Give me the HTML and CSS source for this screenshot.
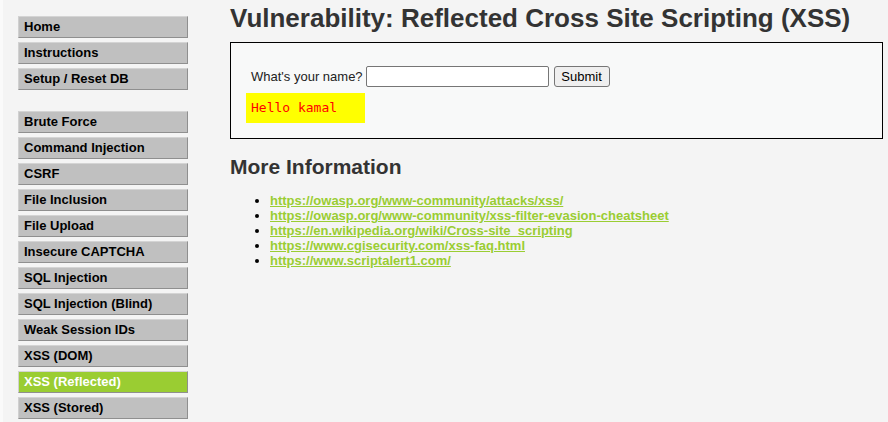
FILE: index.html
```html
<!DOCTYPE html>
<html>
<head>
<meta charset="utf-8">
<link rel="stylesheet" href="styles.css">
</head>
<body>
<div class="page">
  <div class="strip"></div>
  <nav class="menu">
    <ul class="menu-group">
      <li><a class="item" href="#">Home</a></li>
      <li><a class="item" href="#">Instructions</a></li>
      <li><a class="item" href="#">Setup / Reset DB</a></li>
    </ul>
    <ul class="menu-group">
      <li><a class="item" href="#">Brute Force</a></li>
      <li><a class="item" href="#">Command Injection</a></li>
      <li><a class="item" href="#">CSRF</a></li>
      <li><a class="item" href="#">File Inclusion</a></li>
      <li><a class="item" href="#">File Upload</a></li>
      <li><a class="item" href="#">Insecure CAPTCHA</a></li>
      <li><a class="item" href="#">SQL Injection</a></li>
      <li><a class="item" href="#">SQL Injection (Blind)</a></li>
      <li><a class="item" href="#">Weak Session IDs</a></li>
      <li><a class="item" href="#">XSS (DOM)</a></li>
      <li><a class="item selected" href="#">XSS (Reflected)</a></li>
      <li><a class="item" href="#">XSS (Stored)</a></li>
    </ul>
  </nav>
  <main class="main">
    <h1 class="title">Vulnerability: Reflected Cross Site Scripting (XSS)</h1>
    <div class="vuln-box">
      <form class="vuln-form">
        <span class="label">What's your name?</span>
        <input class="name-input" type="text">
        <button class="submit" type="button">Submit</button>
      </form>
      <pre class="result">Hello kamal</pre>
    </div>
    <h2 class="subtitle">More Information</h2>
    <ul class="links">
      <li><a href="#">https://owasp.org/www-community/attacks/xss/</a></li>
      <li><a href="#">https://owasp.org/www-community/xss-filter-evasion-cheatsheet</a></li>
      <li><a href="#">https://en.wikipedia.org/wiki/Cross-site_scripting</a></li>
      <li><a href="#">https://www.cgisecurity.com/xss-faq.html</a></li>
      <li><a href="#">https://www.scriptalert1.com/</a></li>
    </ul>
  </main>
</div>
</body>
</html>
```
FILE: styles.css
```css
html, body {
  margin: 0;
  padding: 0;
  background: #f4f4f4;
  font-family: "Liberation Sans", Arial, sans-serif;
  font-size: 13px;
  color: #000;
}
.page {
  display: flex;
  align-items: flex-start;
  min-height: 422px;
}
.strip {
  width: 3px;
  align-self: stretch;
  background: #fafafa;
}
.menu {
  width: 170px;
  margin-left: 15px;
  padding-top: 16px;
}
.menu-group {
  list-style: none;
  margin: 0 0 21px 0;
  padding: 0;
  display: flex;
  flex-direction: column;
  gap: 4px;
}
.item {
  display: block;
  box-sizing: border-box;
  height: 22px;
  line-height: 20px;
  padding-left: 5px;
  background: #c0c0c0;
  border-top: 1px solid #d4d4d4;
  border-left: 1px solid #d0d0d0;
  border-right: 1px solid #8f8f8f;
  border-bottom: 1px solid #8f8f8f;
  color: #000;
  font-weight: bold;
  text-decoration: none;
}
.item.selected {
  background: #9acd32;
  color: #fff;
}
.main {
  margin-left: 42px;
  width: 653px;
}
.title {
  margin: 2px 0 0 0;
  font-size: 26px;
  line-height: 32px;
  font-weight: bold;
  color: #333;
}
.vuln-box {
  margin-top: 8px;
  box-sizing: border-box;
  height: 97px;
  border: 1px solid #000;
  background: #f8f9f9;
  padding: 23px 15px 0 15px;
}
.vuln-form {
  display: flex;
  align-items: center;
  gap: 4px;
  margin: 0 0 6px 5px;
  height: 21px;
}
.label {
  color: #222;
  margin-right: -1px;
}
.name-input {
  box-sizing: border-box;
  width: 183px;
  height: 21px;
  margin: 0 1px 0 0;
  border: 1px solid #767676;
  border-radius: 2px;
  background: #fff;
}
.submit {
  box-sizing: border-box;
  height: 21px;
  width: 56px;
  margin: 0;
  padding: 0;
  border: 1px solid #767676;
  border-radius: 3px;
  background: #efefef;
  font-family: "Liberation Sans", Arial, sans-serif;
  font-size: 13px;
  color: #000;
}
.result {
  margin: 0;
  width: 119px;
  height: 30px;
  box-sizing: border-box;
  padding: 6px 0 0 5px;
  background: #ffff00;
  color: #ff0000;
  font-family: "DejaVu Sans Mono", monospace;
  font-size: 13px;
  line-height: 17px;
}
.subtitle {
  margin: 16px 0 0 0;
  font-size: 21px;
  line-height: 24px;
  font-weight: bold;
  color: #333;
}
.links {
  margin: 14px 0 0 0;
  padding-left: 40px;
  list-style: disc;
}
.links li {
  line-height: 15px;
}
.links a {
  color: #9acd32;
  font-weight: bold;
  text-decoration: underline;
}
```
